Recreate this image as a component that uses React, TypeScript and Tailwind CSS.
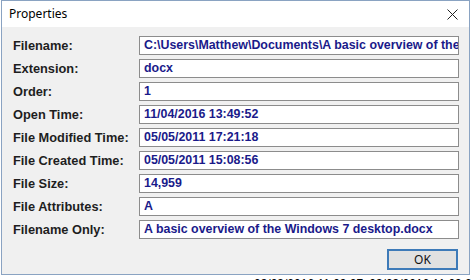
import React from "react";

const rows: [string, string][] = [
  ["Filename:", "C:\\Users\\Matthew\\Documents\\A basic overview of the Windows 7 desktop.docx"],
  ["Extension:", "docx"],
  ["Order:", "1"],
  ["Open Time:", "11/04/2016 13:49:52"],
  ["File Modified Time:", "05/05/2011 17:21:18"],
  ["File Created Time:", "05/05/2011 15:08:56"],
  ["File Size:", "14,959"],
  ["File Attributes:", "A"],
  ["Filename Only:", "A basic overview of the Windows 7 desktop.docx"],
];

export default function App() {
  return (
    <div className="w-[472px] h-[280px] bg-white overflow-hidden flex flex-col">
      <div className="ml-[1px] w-[469px] h-[275px] shrink-0 border border-[#8aa3c2] flex flex-col">
        <div className="h-[26px] bg-white flex items-center justify-between pl-[7px] pr-[11px]">
          <span className="text-[12px] text-black" style={{ fontFamily: '"Noto Sans", "Open Sans", sans-serif' }}>
            Properties
          </span>
          <svg width="11" height="11" viewBox="0 0 11 11" className="mt-[1px]">
            <path d="M0.5 0.5 L10.5 10.5 M10.5 0.5 L0.5 10.5" stroke="#222" strokeWidth="1" fill="none" />
          </svg>
        </div>
        <div className="flex-1 bg-[#f0f0f0] pt-[9px] pl-[11px] pr-[10px] flex flex-col">
          <div
            className="grid grid-cols-[126px_1fr] gap-y-[4px]"
            style={{ fontFamily: '"Liberation Sans", Arial, sans-serif' }}
          >
            {rows.map(([label, value]) => (
              <React.Fragment key={label}>
                <div className="h-[19px] flex items-center text-[12.8px] font-bold text-[#1e1e1e] whitespace-nowrap">
                  {label}
                </div>
                <div className="h-[19px] border border-[#8c8c8c] bg-white flex items-center pl-[4px] overflow-hidden">
                  <span className="text-[12.4px] font-bold text-[#1a1a8a] whitespace-nowrap">{value}</span>
                </div>
              </React.Fragment>
            ))}
          </div>
          <div className="flex justify-end mt-[10px] pr-[1px]">
            <div
              className="w-[71px] h-[21px] border-2 border-[#3d7ab8] bg-[#e1e1e1] flex items-center justify-center text-[12px] text-[#111]"
              style={{ fontFamily: '"Noto Sans", "Open Sans", sans-serif' }}
            >
              OK
            </div>
          </div>
        </div>
      </div>
      <div
        className="flex text-[12px] leading-[12px] text-black pl-[254px] pt-[3px] gap-[6px] whitespace-nowrap"
        style={{ fontFamily: '"Liberation Sans", Arial, sans-serif' }}
      >
        <span>03/03/2016 11:09:27</span>
        <span>03/03/2016 11:09:29</span>
      </div>
    </div>
  );
}
